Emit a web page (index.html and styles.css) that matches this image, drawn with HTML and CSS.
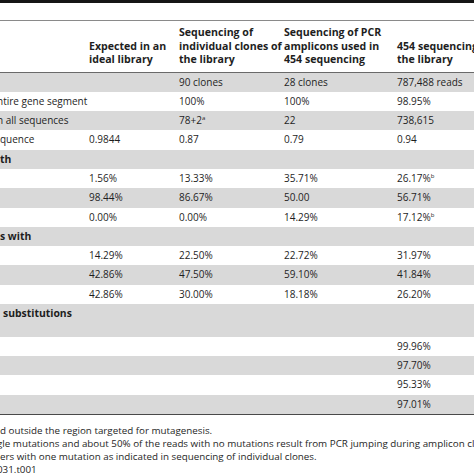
FILE: index.html
```html
<!DOCTYPE html>
<html>
<head>
<meta charset="utf-8">
<link rel="stylesheet" href="styles.css">
</head>
<body>
<div class="page">
  <div class="topbar"></div>
  <div class="tablewrap">
    <table class="data">
      <colgroup>
        <col class="c1"><col class="c2"><col class="c3"><col class="c4"><col class="c5">
      </colgroup>
      <thead>
        <tr>
          <th></th>
          <th>Expected in an<br>ideal library</th>
          <th>Sequencing of<br>individual clones of<br>the library</th>
          <th>Sequencing of PCR<br>amplicons used in<br>454 sequencing</th>
          <th>454 sequencing of<br>the library</th>
        </tr>
      </thead>
      <tbody>
        <tr><td></td><td></td><td>90 clones</td><td>28 clones</td><td>787,488 reads</td></tr>
        <tr><td><span class="cut">ntire gene segment</span></td><td></td><td>100%</td><td>100%</td><td>98.95%</td></tr>
        <tr><td><span class="cut">n all sequences</span></td><td></td><td>78+2<sup>a</sup></td><td>22</td><td>738,615</td></tr>
        <tr><td>quence</td><td>0.9844</td><td>0.87</td><td>0.79</td><td>0.94</td></tr>
        <tr class="sub"><td>th</td><td></td><td></td><td></td><td></td></tr>
        <tr><td></td><td>1.56%</td><td>13.33%</td><td>35.71%</td><td>26.17%<sup>b</sup></td></tr>
        <tr><td></td><td>98.44%</td><td>86.67%</td><td>50.00</td><td>56.71%</td></tr>
        <tr><td></td><td>0.00%</td><td>0.00%</td><td>14.29%</td><td>17.12%<sup>b</sup></td></tr>
        <tr class="sub"><td>s with</td><td></td><td></td><td></td><td></td></tr>
        <tr><td></td><td>14.29%</td><td>22.50%</td><td>22.72%</td><td>31.97%</td></tr>
        <tr><td></td><td>42.86%</td><td>47.50%</td><td>59.10%</td><td>41.84%</td></tr>
        <tr><td></td><td>42.86%</td><td>30.00%</td><td>18.18%</td><td>26.20%</td></tr>
        <tr class="sub tall"><td><span class="ind">substitutions</span><br>&nbsp;</td><td></td><td></td><td></td><td></td></tr>
        <tr><td></td><td></td><td></td><td></td><td>99.96%</td></tr>
        <tr><td></td><td></td><td></td><td></td><td>97.70%</td></tr>
        <tr><td></td><td></td><td></td><td></td><td>95.33%</td></tr>
        <tr><td></td><td></td><td></td><td></td><td>97.01%</td></tr>
      </tbody>
    </table>
  </div>
  <div class="notes">
    <p>d outside the region targeted for mutagenesis.</p>
    <p><span class="cut">gle mutations and about 50% of the reads with no mutations result from PCR jumping during amplicon cloning.</span></p>
    <p>ers with one mutation as indicated in sequencing of individual clones.</p>
    <p><span class="cut">031.t001</span></p>
  </div>
</div>
</body>
</html>
```
FILE: styles.css
```css
html, body {
  margin: 0;
  padding: 0;
  background: #ffffff;
}
.page {
  width: 474px;
  height: 474px;
  overflow: hidden;
  font-family: "Open Sans", "DejaVu Sans", sans-serif;
  color: #1e1e1e;
}
.topbar {
  height: 3px;
  background: #151515;
}
.tablewrap {
  margin-top: 17px;
  width: 474px;
  overflow: hidden;
}
.data {
  border-collapse: collapse;
  table-layout: fixed;
  width: 512px;
  border-top: 1px solid #8a8a8a;
  border-bottom: 1px solid #4a4a4a;
}
.c1 { width: 84px; }
.c2 { width: 90px; }
.c3 { width: 105px; }
.c4 { width: 113px; }
.c5 { width: 120px; }
.data th {
  font-size: 10.6px;
  font-weight: 700;
  line-height: 13.5px;
  text-align: left;
  vertical-align: bottom;
  white-space: nowrap;
  padding: 5px 5px 5px 5px;
  border-bottom: 1px solid #6a6a6a;
}
.data td {
  font-size: 10px;
  line-height: 13.3px;
  padding: 3px 5px;
  white-space: nowrap;
  vertical-align: top;
}
.data td:first-child {
  padding-left: 0;
  padding-right: 0;
}
.data tbody tr:nth-child(odd) td {
  background: #d9d9d9;
}
.data tr.sub td {
  font-weight: 700;
  font-size: 10.4px;
}
.data sup {
  font-size: 6px;
  line-height: 0;
  vertical-align: 4px;
}
.cut {
  display: inline-block;
  margin-left: -3px;
}
.ind {
  padding-left: 3px;
}
.notes {
  margin-top: 9px;
  font-size: 9.8px;
  line-height: 13px;
  white-space: nowrap;
}
.notes p {
  margin: 0;
}
```
